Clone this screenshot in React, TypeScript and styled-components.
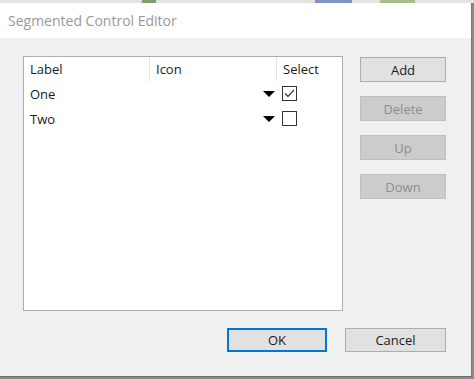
import React from "react";
import styled, { createGlobalStyle } from "styled-components";

const GlobalStyle = createGlobalStyle`
  html, body {
    margin: 0;
    padding: 0;
    background: #9a9a9a;
  }
  body {
    font-family: "Open Sans", "Noto Sans", sans-serif;
  }
`;

const Screen = styled.div`
  width: 474px;
  height: 379px;
  display: flex;
  flex-direction: column;
  overflow: hidden;
  background: #8a8a8a;
`;

const Backdrop = styled.div`
  height: 3px;
  flex: 0 0 auto;
  background: linear-gradient(
    90deg,
    #e2e2e2 0 142px,
    #7fa06c 142px 156px,
    #e2e2e2 156px 315px,
    #7f94c0 315px 352px,
    #e2e2e2 352px 380px,
    #a9bd8c 380px 415px,
    #e2e2e2 415px
  );
`;

const Window = styled.div`
  width: 471px;
  height: 373px;
  display: flex;
  flex-direction: column;
  border-right: 1px solid #7a7a7a;
  border-bottom: 1px solid #6f6f6f;
`;

const TitleBar = styled.div`
  height: 35px;
  flex: 0 0 auto;
  display: flex;
  align-items: center;
  padding-left: 8px;
  background: #ffffff;
  color: #999999;
  font-size: 14px;
`;

const Body = styled.div`
  flex: 1;
  display: flex;
  flex-direction: column;
  background: #f0f0f0;
  padding: 18px 25px 0 23px;
`;

const Main = styled.div`
  display: flex;
  gap: 17px;
`;

const ListBox = styled.div`
  width: 320px;
  height: 255px;
  box-sizing: border-box;
  border: 1px solid #adadad;
  background: #ffffff;
  font-size: 13px;
  color: #1a1a1a;
`;

const Row = styled.div<{ $header?: boolean }>`
  display: grid;
  grid-template-columns: 126px 127px 1fr;
  height: ${(p) => (p.$header ? 24 : 25)}px;
`;

const Cell = styled.div<{ $divider?: boolean; $right?: boolean }>`
  display: flex;
  align-items: center;
  justify-content: ${(p) => (p.$right ? "flex-end" : "flex-start")};
  padding: ${(p) => (p.$right ? "0 2px 0 0" : "0 0 0 6px")};
  border-right: ${(p) => (p.$divider ? "1px solid #e5e5e5" : "none")};
`;

const Triangle = styled.span`
  width: 0;
  height: 0;
  border-left: 6px solid transparent;
  border-right: 6px solid transparent;
  border-top: 6px solid #000000;
`;

const CheckBox = styled.span`
  width: 13px;
  height: 13px;
  border: 1px solid #333333;
  background: #ffffff;
  display: flex;
  align-items: center;
  justify-content: center;
  margin-left: -1px;
`;

const SideButtons = styled.div`
  display: flex;
  flex-direction: column;
  gap: 14px;
  margin-top: 1px;
`;

const Button = styled.button<{ $disabled?: boolean; $focused?: boolean; $width?: number }>`
  width: ${(p) => p.$width ?? 86}px;
  height: ${(p) => (p.$width ? 24 : 25)}px;
  padding: 0;
  box-sizing: border-box;
  font-family: "Open Sans", "Noto Sans", sans-serif;
  font-size: 13px;
  background: ${(p) => (p.$disabled ? "#cccccc" : "#e1e1e1")};
  color: ${(p) => (p.$disabled ? "#8c8c8c" : "#1a1a1a")};
  border: ${(p) =>
    p.$focused
      ? "2px solid #0078d7"
      : p.$disabled
      ? "1px solid #bfbfbf"
      : "1px solid #adadad"};
`;

const Footer = styled.div`
  display: flex;
  justify-content: flex-end;
  gap: 18px;
  margin-top: 17px;
`;

const CheckMark = () => (
  <svg width="11" height="9" viewBox="0 0 11 9">
    <path d="M1 4.5 L4 7.5 L10 1" fill="none" stroke="#333" strokeWidth="1.2" />
  </svg>
);

const rows = [
  { label: "One", checked: true },
  { label: "Two", checked: false },
];

const App = () => {
  return (
    <Screen>
      <GlobalStyle />
      <Backdrop />
      <Window>
        <TitleBar>Segmented Control Editor</TitleBar>
        <Body>
          <Main>
            <ListBox>
              <Row $header>
                <Cell $divider>Label</Cell>
                <Cell $divider>Icon</Cell>
                <Cell>Select</Cell>
              </Row>
              {rows.map((r) => (
                <Row key={r.label}>
                  <Cell>{r.label}</Cell>
                  <Cell $right>
                    <Triangle />
                  </Cell>
                  <Cell>
                    <CheckBox>{r.checked && <CheckMark />}</CheckBox>
                  </Cell>
                </Row>
              ))}
            </ListBox>
            <SideButtons>
              <Button>Add</Button>
              <Button $disabled>Delete</Button>
              <Button $disabled>Up</Button>
              <Button $disabled>Down</Button>
            </SideButtons>
          </Main>
          <Footer>
            <Button $focused $width={100}>
              OK
            </Button>
            <Button $width={101}>Cancel</Button>
          </Footer>
        </Body>
      </Window>
    </Screen>
  );
};

export default App;
